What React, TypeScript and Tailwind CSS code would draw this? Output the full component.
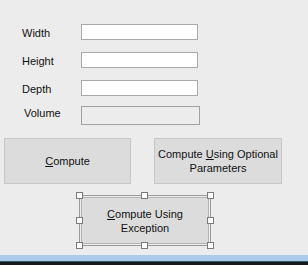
const Field = ({ label }: { label: string }) => (
  <div className="flex items-center h-[16px]">
    <div className="w-[81px] pl-[22px] pt-[2px] text-[11px] text-[#111]">{label}</div>
    <div className="w-[117px] h-[16px] bg-white border border-[#a9a9a9]" />
  </div>
);

const Handle = ({ className }: { className: string }) => (
  <div className={`absolute w-[7px] h-[7px] bg-white border border-[#7a7a7a] ${className}`} />
);

export default function App() {
  return (
    <div
      className="w-[308px] h-[265px] bg-[#ececec] flex flex-col overflow-hidden"
      style={{ fontFamily: '"Liberation Sans", Arial, sans-serif' }}
    >
      <div className="pt-[24px] flex flex-col gap-[12px]">
        <Field label="Width" />
        <Field label="Height" />
        <Field label="Depth" />
      </div>

      <div className="flex items-center mt-[10px] h-[19px]">
        <div className="w-[81px] pl-[24px] pb-[4px] text-[11px] text-[#111]">Volume</div>
        <div className="w-[119px] h-[19px] bg-[#ececec] border border-[#a0a0a0]" />
      </div>

      <div className="flex mt-[13px] pl-[4px] gap-[23px]">
        <button className="w-[127px] h-[46px] bg-[#dcdcdc] border border-[#c6c6c6] text-[11px] text-[#111]">
          <u>C</u>ompute
        </button>
        <button className="w-[128px] h-[46px] bg-[#dcdcdc] border border-[#c6c6c6] text-[11px] leading-[14px] text-[#111]">
          Compute <u>U</u>sing Optional
          <br />
          Parameters
        </button>
      </div>

      <div className="relative ml-[79px] mt-[11px] w-[132px] h-[51px] border border-[#9a9a9a] p-[1px]">
        <button className="w-full h-full bg-[#dcdcdc] border border-[#b4b4b4] text-[11px] leading-[14px] text-[#111]">
          <u>C</u>ompute Using
          <br />
          Exception
        </button>
        <Handle className="-left-[4px] -top-[4px]" />
        <Handle className="left-[61px] -top-[4px]" />
        <Handle className="-right-[4px] -top-[4px]" />
        <Handle className="-left-[4px] top-[21px]" />
        <Handle className="-right-[4px] top-[21px]" />
        <Handle className="-left-[4px] -bottom-[4px]" />
        <Handle className="left-[61px] -bottom-[4px]" />
        <Handle className="-right-[4px] -bottom-[4px]" />
      </div>

      <div className="flex-1" />
      <div className="h-[6px] bg-[#abc9e9]" />
      <div className="h-[1px] bg-[#2e5d6a]" />
      <div className="h-[3px] bg-[#15181c]" />
    </div>
  );
}
